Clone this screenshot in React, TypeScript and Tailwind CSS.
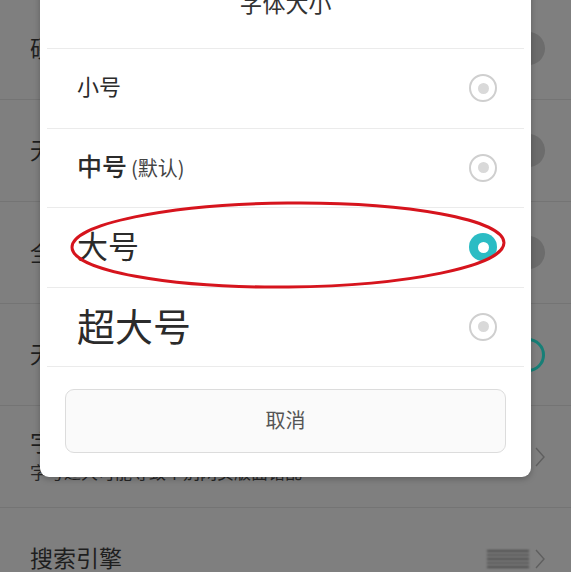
import React from 'react';

const font = { fontFamily: '"Noto Sans CJK SC", "Noto Sans", sans-serif' };

type BgRow = { title: string; sub?: string; right: 'off' | 'on' | 'chevron' | 'engine' };

const bgRows: BgRow[] = [
  { title: '硬件加速', right: 'off' },
  { title: '无图模式', right: 'off' },
  { title: '全屏浏览', right: 'off' },
  { title: '无痕浏览', right: 'on' },
  { title: '字体大小', sub: '字号过大可能导致个别网页版面错乱', right: 'chevron' },
  { title: '搜索引擎', right: 'engine' },
];

const sizes = [
  { label: '小号', cls: 'text-[22px]' },
  { label: '中号', cls: 'text-[25px] font-medium', note: '(默认)' },
  { label: '大号', cls: 'text-[31px]', selected: true },
  { label: '超大号', cls: 'text-[38px]' },
];

function Chevron() {
  return (
    <svg width="10" height="20" viewBox="0 0 10 20" className="shrink-0">
      <path d="M1 1 L9 10 L1 19" fill="none" stroke="#5f5f5f" strokeWidth="1.4" />
    </svg>
  );
}

function RightSide({ kind }: { kind: BgRow['right'] }) {
  if (kind === 'off') {
    return <div className="w-[33px] h-[33px] rounded-full bg-[#6c6c6c]" />;
  }
  if (kind === 'on') {
    return <div className="w-[34px] h-[34px] rounded-full border-[3px] border-[#177f77]" />;
  }
  if (kind === 'chevron') {
    return <Chevron />;
  }
  return (
    <div className="flex items-center gap-[6px]">
      <div className="flex flex-col gap-[2px] blur-[1px]">
        <div className="w-[42px] h-[2px] bg-[#4a4a4a]" />
        <div className="w-[42px] h-[2px] bg-[#555]" />
        <div className="w-[42px] h-[2px] bg-[#4a4a4a]" />
        <div className="w-[42px] h-[2px] bg-[#555]" />
        <div className="w-[42px] h-[2px] bg-[#4a4a4a]" />
      </div>
      <Chevron />
    </div>
  );
}

function Radio({ on }: { on?: boolean }) {
  if (on) {
    return (
      <div className="w-[28px] h-[28px] rounded-full bg-[#2bbcc4] flex items-center justify-center">
        <div className="w-[11px] h-[11px] rounded-full bg-white" />
      </div>
    );
  }
  return (
    <div className="w-[28px] h-[28px] rounded-full border-2 border-[#cfcfcf] flex items-center justify-center">
      <div className="w-[11px] h-[11px] rounded-full bg-[#d9d9d9]" />
    </div>
  );
}

export default function App() {
  return (
    <div className="relative w-[571px] h-[572px] overflow-hidden bg-[#7f7f7f] text-[#1e1e1e]" style={font}>
      {/* settings list behind the dim */}
      <div className="-mt-[2px] flex flex-col">
        {bgRows.map((r) => (
          <div
            key={r.title}
            className="h-[102px] shrink-0 border-b border-[#747474] pl-[30px] pr-[26px] flex items-center justify-between"
          >
            <div className="flex flex-col gap-[6px] pb-[3px]">
              <span className="text-[23px] leading-[28px]">{r.title}</span>
              {r.sub && <span className="text-[17px] leading-[22px] text-[#262626]">{r.sub}</span>}
            </div>
            <RightSide kind={r.right} />
          </div>
        ))}
      </div>

      {/* dialog */}
      <div className="absolute left-[40px] top-[-40px] w-[491px] bg-white rounded-[9px] shadow-[0_2px_6px_rgba(0,0,0,0.25)] flex flex-col">
        <div className="h-[88px] pb-[3px] flex items-center justify-center text-[23px] text-[#333]">字体大小</div>
        <div className="mx-[7px] h-px bg-[#ebebeb]" />
        {sizes.map((s) => (
          <React.Fragment key={s.label}>
            <div className="h-[78.5px] pl-[37px] pr-[34px] flex items-center justify-between text-[#2b2b2b]">
              <div className="flex items-baseline pb-[5px]">
                <span className={s.cls}>{s.label}</span>
                {s.note && <span className="ml-[4px] text-[20px] text-[#444]">{s.note}</span>}
              </div>
              <Radio on={s.selected} />
            </div>
            <div className="mx-[7px] h-px bg-[#ebebeb]" />
          </React.Fragment>
        ))}
        <div className="pt-[22px] pb-[24px] px-[25px]">
          <div className="h-[64px] pb-[3px] rounded-[9px] border border-[#dcdcdc] bg-[#fafafa] flex items-center justify-center text-[20px] text-[#555]">
            取消
          </div>
        </div>
      </div>

      {/* red annotation ellipse */}
      <svg className="absolute left-[64px] top-[196px]" width="450" height="100" viewBox="0 0 450 100">
        <ellipse cx="224" cy="49" rx="216" ry="42" fill="none" stroke="#d6141d" strokeWidth="3" transform="rotate(-0.6 224 49)" />
      </svg>
    </div>
  );
}
